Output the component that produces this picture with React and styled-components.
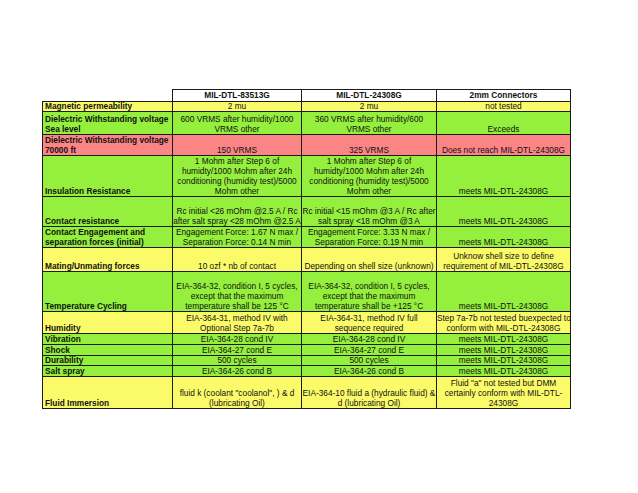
import React from "react";
import styled, { createGlobalStyle } from "styled-components";

const GlobalStyle = createGlobalStyle`
  html, body {
    margin: 0;
    padding: 0;
    background: #ffffff;
  }
`;

const COLORS = {
  yellow: "#fbfb6a",
  green: "#95ef3d",
  red: "#fb8484",
  white: "#ffffff"
};

const LINE = "#1c1c1c";

const Page = styled.div`
  width: 638px;
  height: 493px;
  padding-top: 89px;
  padding-left: 42px;
  box-sizing: border-box;
  font-family: "Liberation Sans", Arial, sans-serif;
  font-size: 8.3px;
  line-height: 10px;
  color: #111;
`;

const Sheet = styled.div`
  display: flex;
  flex-direction: column;
  width: 529px;
`;

const Row = styled.div`
  display: grid;
  grid-template-columns: 131px 129px 135px 134px;
  grid-template-rows: minmax(0, 1fr);
  flex: 0 0 auto;
  height: ${props => props.h}px;
  background-color: ${props => COLORS[props.tone]};
`;

const Box = styled.div`
  box-sizing: border-box;
  min-height: 0;
  display: flex;
  flex-direction: column;
  justify-content: flex-end;
  white-space: nowrap;
  padding-bottom: 0.5px;
  border-right: 1px solid ${LINE};
  border-bottom: 1px solid ${LINE};
`;

const BlankHead = styled(Box)`
  background: #ffffff;
`;

const HeadCell = styled(Box)`
  border-top: 1px solid ${LINE};
  font-weight: 700;
  text-align: center;
  padding-bottom: 1px;
`;

const Label = styled(Box)`
  border-left: 1px solid ${LINE};
  font-weight: 700;
  text-align: left;
  padding-left: 2px;
`;

const Cell = styled(Box)`
  text-align: center;
`;

const MEETS = "meets MIL-DTL-24308G";

const rows = [
  { h: 10, tone: "yellow", label: ["Magnetic permeability"], a: ["2 mu"], b: ["2 mu"], c: ["not tested"] },
  {
    h: 23,
    tone: "green",
    label: ["Dielectric Withstanding voltage", "Sea level"],
    a: ["600 VRMS after humidity/1000", "VRMS other"],
    b: ["360 VRMS after humidity/600", "VRMS other"],
    c: ["Exceeds"]
  },
  {
    h: 21,
    tone: "red",
    label: ["Dielectric Withstanding voltage", "70000 ft"],
    a: ["150 VRMS"],
    b: ["325 VRMS"],
    c: ["Does not reach MIL-DTL-24308G"]
  },
  {
    h: 41,
    tone: "green",
    label: ["Insulation Resistance"],
    a: ["1 Mohm after Step 6 of", "humidty/1000 Mohm after 24h", "conditioning (humidity test)/5000", "Mohm other"],
    b: ["1 Mohm after Step 6 of", "humidty/1000 Mohm after 24h", "conditioning (humidity test)/5000", "Mohm other"],
    c: [MEETS]
  },
  {
    h: 30,
    tone: "green",
    label: ["Contact resistance"],
    a: ["Rc initial <26 mOhm @2.5 A / Rc", "after salt spray <28 mOhm @2.5 A"],
    b: ["Rc initial <15 mOhm @3 A / Rc after", "salt spray <18 mOhm @3 A"],
    c: [MEETS]
  },
  {
    h: 21,
    tone: "green",
    label: ["Contact Engagement and", "separation forces (initial)"],
    a: ["Engagement Force: 1.67 N max /", "Separation Force: 0.14 N min"],
    b: ["Engagement Force: 3.33 N max /", "Separation Force: 0.19 N min"],
    c: [MEETS]
  },
  {
    h: 24,
    tone: "yellow",
    label: ["Mating/Unmating forces"],
    a: ["10 ozf * nb of contact"],
    b: ["Depending on shell size (unknown)"],
    c: ["Unknow shell size to define", "requirement of MIL-DTL-24308G"]
  },
  {
    h: 40,
    tone: "green",
    label: ["Temperature Cycling"],
    a: ["EIA-364-32, condition I, 5 cycles,", "except that the maximum", "temperature shall be 125 °C"],
    b: ["EIA-364-32, condition I, 5 cycles,", "except that the maximum", "temperature shall be +125 °C"],
    c: [MEETS]
  },
  {
    h: 22,
    tone: "yellow",
    label: ["Humidity"],
    a: ["EIA-364-31, method IV with", "Optional Step 7a-7b"],
    b: ["EIA-364-31, method IV full", "sequence required"],
    c: ["Step 7a-7b not tested buexpected to", "conform with MIL-DTL-24308G"]
  },
  { h: 11, tone: "green", label: ["Vibration"], a: ["EIA-364-28 cond IV"], b: ["EIA-364-28 cond IV"], c: [MEETS] },
  { h: 11, tone: "green", label: ["Shock"], a: ["EIA-364-27 cond E"], b: ["EIA-364-27 cond E"], c: [MEETS] },
  { h: 10, tone: "green", label: ["Durability"], a: ["500 cycles"], b: ["500 cycles"], c: [MEETS] },
  { h: 11, tone: "green", label: ["Salt spray"], a: ["EIA-364-26 cond B"], b: ["EIA-364-26 cond B"], c: [MEETS] },
  {
    h: 32,
    tone: "yellow",
    label: ["Fluid Immersion"],
    a: ["fluid k (coolant \"coolanol\", ) & d", "(lubricating Oil)"],
    b: ["EIA-364-10 fluid a (hydraulic fluid) &", "d (lubricating Oil)"],
    c: ["Fluid \"a\" not tested but DMM", "certainly conform with MIL-DTL-", "24308G"]
  }
];

const Lines = ({ lines }) => (
  <div>
    {lines.map((line, i) => (
      <React.Fragment key={i}>
        {i > 0 && <br />}
        {line}
      </React.Fragment>
    ))}
  </div>
);

export default function App() {
  return (
    <Page>
      <GlobalStyle />
      <Sheet>
        <Row h={13} tone="white">
          <BlankHead />
          <HeadCell>MIL-DTL-83513G</HeadCell>
          <HeadCell>MIL-DTL-24308G</HeadCell>
          <HeadCell>2mm Connectors</HeadCell>
        </Row>
        {rows.map((r, i) => (
          <Row key={i} h={r.h} tone={r.tone}>
            <Label>
              <Lines lines={r.label} />
            </Label>
            <Cell>
              <Lines lines={r.a} />
            </Cell>
            <Cell>
              <Lines lines={r.b} />
            </Cell>
            <Cell>
              <Lines lines={r.c} />
            </Cell>
          </Row>
        ))}
      </Sheet>
    </Page>
  );
}
